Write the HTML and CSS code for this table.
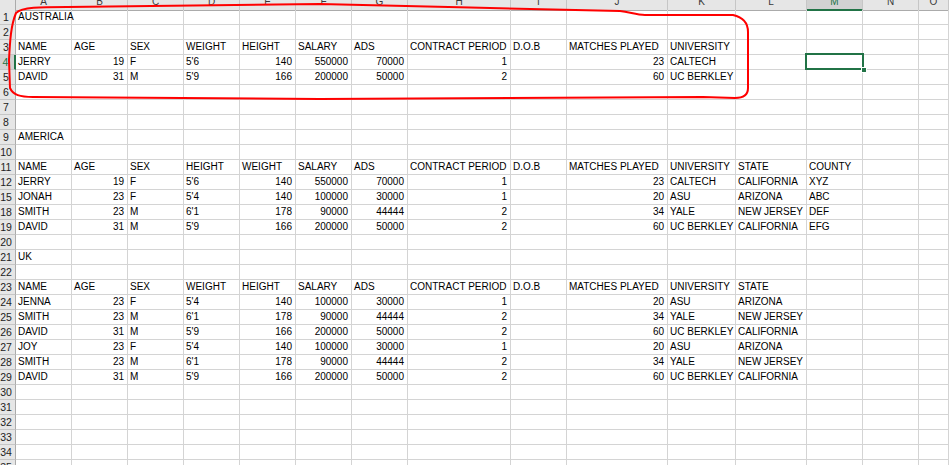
FILE: index.html
```html
<!DOCTYPE html>
<html>
<head>
<meta charset="utf-8">
<link rel="stylesheet" href="styles.css">
</head>
<body>
<div class="page">
<div class="sheet">
<div class="row colhead"><span class="corner"></span><span>A</span><span>B</span><span>C</span><span>D</span><span>E</span><span>F</span><span>G</span><span>H</span><span>I</span><span>J</span><span>K</span><span>L</span><span class="hl">M</span><span>N</span><span>O</span></div>
<div class="row"><span class="rh">1</span><span>AUSTRALIA</span><span></span><span></span><span></span><span></span><span></span><span></span><span></span><span></span><span></span><span></span><span></span><span></span><span></span><span></span></div>
<div class="row"><span class="rh">2</span><span></span><span></span><span></span><span></span><span></span><span></span><span></span><span></span><span></span><span></span><span></span><span></span><span></span><span></span><span></span></div>
<div class="row"><span class="rh">3</span><span>NAME</span><span>AGE</span><span>SEX</span><span>WEIGHT</span><span>HEIGHT</span><span>SALARY</span><span>ADS</span><span>CONTRACT PERIOD</span><span>D.O.B</span><span>MATCHES PLAYED</span><span>UNIVERSITY</span><span></span><span></span><span></span><span></span></div>
<div class="row"><span class="rh rsel">4</span><span>JERRY</span><span class="n">19</span><span>F</span><span>5'6</span><span class="n">140</span><span class="n">550000</span><span class="n">70000</span><span class="n">1</span><span></span><span class="n">23</span><span>CALTECH</span><span></span><span class="active"><span class="selbox"><span class="handle"></span></span></span><span></span><span></span></div>
<div class="row"><span class="rh">5</span><span>DAVID</span><span class="n">31</span><span>M</span><span>5'9</span><span class="n">166</span><span class="n">200000</span><span class="n">50000</span><span class="n">2</span><span></span><span class="n">60</span><span>UC BERKLEY</span><span></span><span></span><span></span><span></span></div>
<div class="row"><span class="rh">6</span><span></span><span></span><span></span><span></span><span></span><span></span><span></span><span></span><span></span><span></span><span></span><span></span><span></span><span></span><span></span></div>
<div class="row"><span class="rh">7</span><span></span><span></span><span></span><span></span><span></span><span></span><span></span><span></span><span></span><span></span><span></span><span></span><span></span><span></span><span></span></div>
<div class="row"><span class="rh">8</span><span></span><span></span><span></span><span></span><span></span><span></span><span></span><span></span><span></span><span></span><span></span><span></span><span></span><span></span><span></span></div>
<div class="row"><span class="rh">9</span><span>AMERICA</span><span></span><span></span><span></span><span></span><span></span><span></span><span></span><span></span><span></span><span></span><span></span><span></span><span></span><span></span></div>
<div class="row"><span class="rh">10</span><span></span><span></span><span></span><span></span><span></span><span></span><span></span><span></span><span></span><span></span><span></span><span></span><span></span><span></span><span></span></div>
<div class="row"><span class="rh">11</span><span>NAME</span><span>AGE</span><span>SEX</span><span>HEIGHT</span><span>WEIGHT</span><span>SALARY</span><span>ADS</span><span>CONTRACT PERIOD</span><span>D.O.B</span><span>MATCHES PLAYED</span><span>UNIVERSITY</span><span>STATE</span><span>COUNTY</span><span></span><span></span></div>
<div class="row"><span class="rh">12</span><span>JERRY</span><span class="n">19</span><span>F</span><span>5'6</span><span class="n">140</span><span class="n">550000</span><span class="n">70000</span><span class="n">1</span><span></span><span class="n">23</span><span>CALTECH</span><span>CALIFORNIA</span><span>XYZ</span><span></span><span></span></div>
<div class="row"><span class="rh">15</span><span>JONAH</span><span class="n">23</span><span>F</span><span>5'4</span><span class="n">140</span><span class="n">100000</span><span class="n">30000</span><span class="n">1</span><span></span><span class="n">20</span><span>ASU</span><span>ARIZONA</span><span>ABC</span><span></span><span></span></div>
<div class="row"><span class="rh">18</span><span>SMITH</span><span class="n">23</span><span>M</span><span>6'1</span><span class="n">178</span><span class="n">90000</span><span class="n">44444</span><span class="n">2</span><span></span><span class="n">34</span><span>YALE</span><span>NEW JERSEY</span><span>DEF</span><span></span><span></span></div>
<div class="row"><span class="rh">19</span><span>DAVID</span><span class="n">31</span><span>M</span><span>5'9</span><span class="n">166</span><span class="n">200000</span><span class="n">50000</span><span class="n">2</span><span></span><span class="n">60</span><span>UC BERKLEY</span><span>CALIFORNIA</span><span>EFG</span><span></span><span></span></div>
<div class="row"><span class="rh">20</span><span></span><span></span><span></span><span></span><span></span><span></span><span></span><span></span><span></span><span></span><span></span><span></span><span></span><span></span><span></span></div>
<div class="row"><span class="rh">21</span><span>UK</span><span></span><span></span><span></span><span></span><span></span><span></span><span></span><span></span><span></span><span></span><span></span><span></span><span></span><span></span></div>
<div class="row"><span class="rh">22</span><span></span><span></span><span></span><span></span><span></span><span></span><span></span><span></span><span></span><span></span><span></span><span></span><span></span><span></span><span></span></div>
<div class="row"><span class="rh">23</span><span>NAME</span><span>AGE</span><span>SEX</span><span>WEIGHT</span><span>HEIGHT</span><span>SALARY</span><span>ADS</span><span>CONTRACT PERIOD</span><span>D.O.B</span><span>MATCHES PLAYED</span><span>UNIVERSITY</span><span>STATE</span><span></span><span></span><span></span></div>
<div class="row"><span class="rh">24</span><span>JENNA</span><span class="n">23</span><span>F</span><span>5'4</span><span class="n">140</span><span class="n">100000</span><span class="n">30000</span><span class="n">1</span><span></span><span class="n">20</span><span>ASU</span><span>ARIZONA</span><span></span><span></span><span></span></div>
<div class="row"><span class="rh">25</span><span>SMITH</span><span class="n">23</span><span>M</span><span>6'1</span><span class="n">178</span><span class="n">90000</span><span class="n">44444</span><span class="n">2</span><span></span><span class="n">34</span><span>YALE</span><span>NEW JERSEY</span><span></span><span></span><span></span></div>
<div class="row"><span class="rh">26</span><span>DAVID</span><span class="n">31</span><span>M</span><span>5'9</span><span class="n">166</span><span class="n">200000</span><span class="n">50000</span><span class="n">2</span><span></span><span class="n">60</span><span>UC BERKLEY</span><span>CALIFORNIA</span><span></span><span></span><span></span></div>
<div class="row"><span class="rh">27</span><span>JOY</span><span class="n">23</span><span>F</span><span>5'4</span><span class="n">140</span><span class="n">100000</span><span class="n">30000</span><span class="n">1</span><span></span><span class="n">20</span><span>ASU</span><span>ARIZONA</span><span></span><span></span><span></span></div>
<div class="row"><span class="rh">28</span><span>SMITH</span><span class="n">23</span><span>M</span><span>6'1</span><span class="n">178</span><span class="n">90000</span><span class="n">44444</span><span class="n">2</span><span></span><span class="n">34</span><span>YALE</span><span>NEW JERSEY</span><span></span><span></span><span></span></div>
<div class="row"><span class="rh">29</span><span>DAVID</span><span class="n">31</span><span>M</span><span>5'9</span><span class="n">166</span><span class="n">200000</span><span class="n">50000</span><span class="n">2</span><span></span><span class="n">60</span><span>UC BERKLEY</span><span>CALIFORNIA</span><span></span><span></span><span></span></div>
<div class="row"><span class="rh">30</span><span></span><span></span><span></span><span></span><span></span><span></span><span></span><span></span><span></span><span></span><span></span><span></span><span></span><span></span><span></span></div>
<div class="row"><span class="rh">31</span><span></span><span></span><span></span><span></span><span></span><span></span><span></span><span></span><span></span><span></span><span></span><span></span><span></span><span></span><span></span></div>
<div class="row"><span class="rh">32</span><span></span><span></span><span></span><span></span><span></span><span></span><span></span><span></span><span></span><span></span><span></span><span></span><span></span><span></span><span></span></div>
<div class="row"><span class="rh">33</span><span></span><span></span><span></span><span></span><span></span><span></span><span></span><span></span><span></span><span></span><span></span><span></span><span></span><span></span><span></span></div>
<div class="row"><span class="rh">34</span><span></span><span></span><span></span><span></span><span></span><span></span><span></span><span></span><span></span><span></span><span></span><span></span><span></span><span></span><span></span></div>
<div class="row"><span class="rh">35</span><span></span><span></span><span></span><span></span><span></span><span></span><span></span><span></span><span></span><span></span><span></span><span></span><span></span><span></span><span></span></div>
</div>
<svg class="markup" width="949" height="465" viewBox="0 0 949 465" xmlns="http://www.w3.org/2000/svg">
<path d="M 16 13 C 22 7, 40 7, 67 7 L 320 4 C 420 6, 520 9, 620 11 C 630 12, 636 15, 645 15 L 733 15 C 742 17, 748 22, 748 32 L 748 88 C 748 95, 744 98, 735 98 L 703 97 L 320 99 L 33 97 C 20 97, 13 95, 10 88 L 9 60 C 10 40, 11 25, 16 13 Z" fill="none" stroke="#ff0000" stroke-width="2" stroke-linejoin="round"/>
</svg>
</div>
</body>
</html>
```
FILE: styles.css
```css
html, body {
  margin: 0;
  padding: 0;
  background: #ffffff;
}

.page {
  position: relative;
  width: 949px;
  height: 465px;
  overflow: hidden;
  font-family: "Liberation Sans", Arial, sans-serif;
  font-size: 10px;
  color: #000000;
}

.sheet {
  margin-top: -6px;
}

.row {
  display: grid;
  grid-template-columns: 16px repeat(7, 56px) 103px 56px 101px 68px 71px 56px 56px 1fr;
  height: 15px;
}

.row > span {
  box-sizing: border-box;
  border-right: 1px solid #d4d4d4;
  border-bottom: 1px solid #d4d4d4;
  line-height: 14px;
  padding: 0 2px;
  white-space: nowrap;
  overflow: visible;
}

.row > .n {
  text-align: right;
  padding-right: 3px;
}

.colhead {
  height: 16px;
}

.colhead > span {
  background: #e6e6e6;
  border-right-color: #c6c6c6;
  border-bottom-color: #ababab;
  text-align: center;
  line-height: 15px;
  font-size: 10px;
  color: #3a3a3a;
}

.colhead > .corner {
  border-right-color: #ababab;
}

.colhead > .hl {
  background: #d2d2d2;
  color: #217346;
  border-bottom: 2px solid #217346;
}

.row > .rh {
  background: #e6e6e6;
  border-right-color: #ababab;
  border-bottom-color: #c6c6c6;
  text-align: center;
  padding: 0 3px 0 0;
  font-size: 10.5px;
  color: #222222;
  overflow: hidden;
}

.row > .rsel {
  background: #d2d2d2;
  color: #217346;
  border-right: 2px solid #217346;
}

.row > .active {
  position: relative;
}

.selbox {
  position: absolute;
  left: -2px;
  top: -2px;
  right: -2px;
  bottom: -1px;
  border: 2px solid #217346;
}

.handle {
  position: absolute;
  right: -5px;
  bottom: -5px;
  width: 6px;
  height: 6px;
  background: #217346;
  border: 1px solid #ffffff;
  box-sizing: border-box;
}

.markup {
  position: absolute;
  left: 0;
  top: 0;
  pointer-events: none;
}
```
